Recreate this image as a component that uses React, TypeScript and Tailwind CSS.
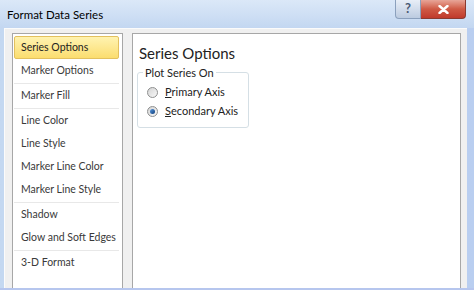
import type { ReactNode } from 'react';

const items: { label: string; sepAfter?: boolean }[] = [
  { label: 'Series Options' },
  { label: 'Marker Options', sepAfter: true },
  { label: 'Marker Fill', sepAfter: true },
  { label: 'Line Color' },
  { label: 'Line Style' },
  { label: 'Marker Line Color' },
  { label: 'Marker Line Style', sepAfter: true },
  { label: 'Shadow' },
  { label: 'Glow and Soft Edges', sepAfter: true },
  { label: '3-D Format' },
];

function Radio({ checked, children }: { checked?: boolean; children: ReactNode }) {
  return (
    <div className="flex items-center gap-[7px] h-[19px]">
      <span className="w-[11px] h-[11px] rounded-full border border-[#8e8f8f] bg-gradient-to-br from-[#d4d4d4] to-[#f8f8f8] flex items-center justify-center">
        {checked && (
          <span className="w-[5px] h-[5px] rounded-full bg-gradient-to-br from-[#5a9ae0] to-[#0f3e7c]" />
        )}
      </span>
      <span className="text-[11px] text-[#222]">{children}</span>
    </div>
  );
}

export default function App() {
  return (
    <div
      className="w-[474px] h-[290px] overflow-hidden flex flex-col bg-gradient-to-r from-[#c4d8f1] to-[#b9cef0]"
      style={{ fontFamily: 'Lato, "Noto Sans", sans-serif' }}
    >
      <div className="h-[28px] relative flex items-center pl-[7px] pt-[2px] bg-gradient-to-b from-[#dbe8f8] to-[#c3d7f1] shrink-0">
        <span className="text-[11.5px] text-black">Format Data Series</span>
        <div className="absolute top-0 right-[8px] flex">
          <div className="w-[26px] h-[19px] rounded-bl-[4px] border border-[#8ba0bd] border-t-0 bg-gradient-to-b from-[#e8eef7] to-[#bccbe0] flex items-center justify-center text-[13px] text-[#4a5a74] font-bold">
            ?
          </div>
          <div className="w-[45px] h-[19px] rounded-br-[4px] border border-[#8a3a30] border-t-0 border-l-0 bg-gradient-to-b from-[#e7a598] via-[#cf5a45] to-[#c0392b] flex items-center justify-center">
            <svg width="11" height="9" viewBox="0 0 11 9">
              <path d="M1.5 1 L9.5 8 M9.5 1 L1.5 8" stroke="white" strokeWidth="2.4" strokeLinecap="round" />
            </svg>
          </div>
        </div>
      </div>

      <div className="flex-1 flex ml-[4px] mr-[7px] bg-[#f0f0f0] border-l border-t border-[#fbfbfb] pt-[4px] pl-[7px] pr-[6px] gap-[9px] min-h-0">
        <div className="w-[111px] bg-white border border-[#a7a7a7] border-b-0 pt-[2px] pl-[1px] pr-[3px]">
          {items.map((it, i) => (
            <div key={it.label}>
              <div
                className={
                  i === 0
                    ? 'h-[23px] flex items-center pl-[6px] text-[10.5px] whitespace-nowrap text-[#222] rounded-[2px] border border-[#e3c15e] bg-gradient-to-b from-[#fff3b0] to-[#fbdd6e]'
                    : 'h-[23px] flex items-center pl-[7px] text-[10.5px] whitespace-nowrap text-[#3a3a3a]'
                }
              >
                {it.label}
              </div>
              {it.sepAfter && <div className="h-px bg-[#e8e8e8] mt-[1px]" />}
            </div>
          ))}
        </div>

        <div className="flex-1 bg-white border border-[#a7a7a7] border-b-0 pl-[4px] pt-[10px]">
          <div className="text-[15px] leading-[18px] text-[#222] pl-[2px]">Series Options</div>
          <div className="relative mt-[10px] w-[112px] h-[56px] border border-[#d5dfe5] rounded-[3px] pt-[10px] pl-[9px]">
            <span className="absolute -top-[8px] left-[5px] bg-white px-[2px] text-[11px] text-[#222]">
              Plot Series On
            </span>
            <Radio>
              <span className="underline">P</span>rimary Axis
            </Radio>
            <Radio checked>
              <span className="underline">S</span>econdary Axis
            </Radio>
          </div>
        </div>
      </div>
      <div className="h-[2px] bg-[#b6c6ee] shrink-0" />
    </div>
  );
}
